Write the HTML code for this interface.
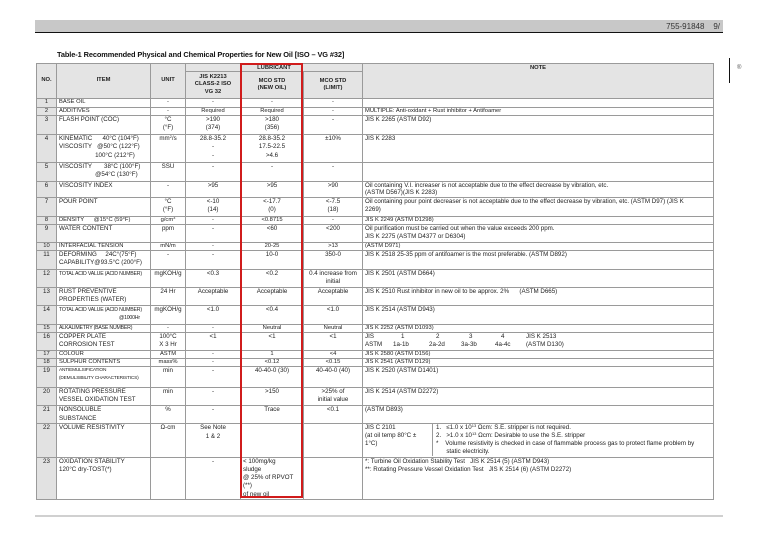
<!DOCTYPE html>
<html><head><meta charset="utf-8"><style>
*{margin:0;padding:0;box-sizing:border-box}
body{width:768px;height:543px;background:#fff;position:relative;overflow:hidden;font-family:"Liberation Sans",sans-serif;color:#222}
.bar{position:absolute;left:35px;top:20px;width:688px;height:13px;background:#c8c8c8;border-bottom:1.5px solid #111}
.bar span{position:absolute;right:3px;top:2px;font-size:8px;color:#333}
.title{position:absolute;left:57px;top:50px;font-size:7.4px;font-weight:bold;color:#111;letter-spacing:-0.1px}
table{position:absolute;left:36px;top:63px;width:677px;border-collapse:collapse;table-layout:fixed;font-size:6.2px;line-height:8.4px}
td,th{border:1px solid #9a9a9a;vertical-align:top;padding:0 2px;overflow:hidden;white-space:nowrap}
th{background:#e4e4e4;font-weight:bold;vertical-align:middle;font-size:5.8px;line-height:7.5px}
td.n{background:#e2e2e2;text-align:center}
td.c{text-align:center}
tr.s td{line-height:7px;font-size:5.8px;vertical-align:middle}
sup{font-size:4px;line-height:0;position:relative;top:-2px;vertical-align:baseline}
.red{position:absolute;left:240px;top:63px;width:63px;height:435px;border:2px solid #d01c1c}
.vl{position:absolute;left:729px;top:58px;width:1px;height:25px;background:#111}
.reg{position:absolute;left:737px;top:65px;font-size:6px;color:#555}
.bl{position:absolute;left:35px;top:515px;width:688px;height:2px;background:#d0d0d0}
.rel{position:relative}
.ab{position:absolute}
</style></head><body>
<div class="bar"><span>755-91848&nbsp;&nbsp;&nbsp;&nbsp;9/</span></div>
<div class="title">Table-1 Recommended Physical and Chemical Properties for New Oil [ISO – VG #32]</div>
<table>
<colgroup><col style="width:20px"><col style="width:94px"><col style="width:35px"><col style="width:55px"><col style="width:63px"><col style="width:59px"><col style="width:351px"></colgroup>
<tr style="height:8px"><th rowspan="2">NO.</th><th rowspan="2">ITEM</th><th rowspan="2">UNIT</th><th colspan="3" style="line-height:6px">LUBRICANT</th><th rowspan="2" style="vertical-align:top;padding-top:1px">NOTE</th></tr>
<tr style="height:27px"><th>JIS K2213<br>CLASS-2 ISO<br>VG 32</th><th>MCO STD<br>(NEW OIL)</th><th>MCO STD<br>(LIMIT)</th></tr>
<tr class="s" style="height:8.7px"><td class="n">1</td><td>BASE OIL</td><td class="c">-</td><td class="c">-</td><td class="c">-</td><td class="c">-</td><td></td></tr>
<tr class="s" style="height:8.3px"><td class="n">2</td><td>ADDITIVES</td><td class="c">-</td><td class="c">Required</td><td class="c">Required</td><td class="c">-</td><td>MULTIPLE: Anti-oxidant + Rust inhibitor + Antifoamer</td></tr>
<tr style="height:19px"><td class="n">3</td><td>FLASH POINT (COC)</td><td class="c">°C<br>(°F)</td><td class="c">&gt;190<br>(374)</td><td class="c">&gt;180<br>(356)</td><td class="c">-</td><td>JIS K 2265 (ASTM D92)</td></tr>
<tr style="height:28px"><td class="n">4</td><td>KINEMATIC&nbsp;&nbsp;&nbsp;&nbsp;&nbsp;&nbsp;40°C (104°F)<br>VISCOSITY&nbsp;&nbsp;&nbsp;@50°C (122°F)<br>&nbsp;&nbsp;&nbsp;&nbsp;&nbsp;&nbsp;&nbsp;&nbsp;&nbsp;&nbsp;&nbsp;&nbsp;&nbsp;&nbsp;&nbsp;&nbsp;&nbsp;&nbsp;&nbsp;&nbsp;&nbsp;100°C (212°F)</td><td class="c">mm<sup>2</sup>/s</td><td class="c">28.8-35.2<br>-<br>-</td><td class="c">28.8-35.2<br>17.5-22.5<br>&gt;4.6</td><td class="c">±10%</td><td>JIS K 2283</td></tr>
<tr style="height:19px"><td class="n">5</td><td>VISCOSITY&nbsp;&nbsp;&nbsp;&nbsp;&nbsp;&nbsp;&nbsp;38°C (100°F)<br>&nbsp;&nbsp;&nbsp;&nbsp;&nbsp;&nbsp;&nbsp;&nbsp;&nbsp;&nbsp;&nbsp;&nbsp;&nbsp;&nbsp;&nbsp;&nbsp;&nbsp;&nbsp;&nbsp;&nbsp;&nbsp;@54°C (130°F)</td><td class="c">SSU</td><td class="c">-</td><td class="c">-</td><td class="c">-</td><td></td></tr>
<tr style="height:16px"><td class="n">6</td><td>VISCOSITY INDEX</td><td class="c">-</td><td class="c">&gt;95</td><td class="c">&gt;95</td><td class="c">&gt;90</td><td style="line-height:7.5px">Oil containing V.I. increaser is not acceptable due to the effect decrease by vibration, etc.<br>(ASTM D567)(JIS K 2283)</td></tr>
<tr style="height:19px"><td class="n">7</td><td>POUR POINT</td><td class="c">°C<br>(°F)</td><td class="c">&lt;-10<br>(14)</td><td class="c">&lt;-17.7<br>(0)</td><td class="c">&lt;-7.5<br>(18)</td><td>Oil containing pour point decreaser is not acceptable due to the effect decrease by vibration, etc. (ASTM D97) (JIS K<br>2269)</td></tr>
<tr class="s" style="height:7px"><td class="n">8</td><td>DENSITY&nbsp;&nbsp;&nbsp;&nbsp;&nbsp;&nbsp;@15°C (59°F)</td><td class="c">g/cm<sup>3</sup></td><td class="c">-</td><td class="c">&lt;0.8715</td><td class="c">-</td><td>JIS K 2249 (ASTM D1298)</td></tr>
<tr style="height:17.7px"><td class="n">9</td><td>WATER CONTENT</td><td class="c">ppm</td><td class="c">-</td><td class="c">&lt;60</td><td class="c">&lt;200</td><td>Oil purification must be carried out when the value exceeds 200 ppm.<br>JIS K 2275 (ASTM D4377 or D6304)</td></tr>
<tr class="s" style="height:7.3px"><td class="n">10</td><td>INTERFACIAL TENSION</td><td class="c">mN/m</td><td class="c">-</td><td class="c">20-25</td><td class="c">&gt;13</td><td>(ASTM D971)</td></tr>
<tr style="height:19px"><td class="n">11</td><td>DEFORMING&nbsp;&nbsp;&nbsp;&nbsp;&nbsp;24C°(75°F)<br>CAPABILITY@93.5°C (200°F)</td><td class="c">-</td><td class="c">-</td><td class="c">10-0</td><td class="c">350-0</td><td>JIS K 2518 25-35 ppm of antifoamer is the most preferable. (ASTM D892)</td></tr>
<tr style="height:18px"><td class="n">12</td><td style="font-size:5.2px;letter-spacing:-0.2px">TOTAL ACID VALUE (ACID NUMBER)</td><td class="c">mgKOH/g</td><td class="c">&lt;0.3</td><td class="c">&lt;0.2</td><td class="c">0.4 increase from<br>initial</td><td>JIS K 2501 (ASTM D664)</td></tr>
<tr style="height:18px"><td class="n">13</td><td>RUST PREVENTIVE<br>PROPERTIES (WATER)</td><td class="c">24 Hr</td><td class="c">Acceptable</td><td class="c">Acceptable</td><td class="c">Acceptable</td><td>JIS K 2510 Rust inhibitor in new oil to be approx. 2%&nbsp;&nbsp;&nbsp;&nbsp;&nbsp;&nbsp;(ASTM D665)</td></tr>
<tr style="height:19px"><td class="n">14</td><td style="font-size:5.2px;letter-spacing:-0.2px">TOTAL ACID VALUE (ACID NUMBER)<br><span style="padding-left:60px">@1000Hr</span></td><td class="c">mgKOH/g</td><td class="c">&lt;1.0</td><td class="c">&lt;0.4</td><td class="c">&lt;1.0</td><td>JIS K 2514 (ASTM D943)</td></tr>
<tr class="s" style="height:7px"><td class="n">15</td><td style="font-size:5.2px;letter-spacing:-0.2px">ALKALIMETRY (BASE NUMBER)</td><td class="c">-</td><td class="c">-</td><td class="c">Neutral</td><td class="c">Neutral</td><td>JIS K 2252 (ASTM D1093)</td></tr>
<tr style="height:18px"><td class="n">16</td><td>COPPER PLATE<br>CORROSION TEST</td><td class="c">100°C<br>X 3 Hr</td><td class="c">&lt;1</td><td class="c">&lt;1</td><td class="c">&lt;1</td><td class="rel">JIS<br>ASTM<span class="ab" style="left:38px;top:0">1</span><span class="ab" style="left:30px;top:8.4px">1a-1b</span><span class="ab" style="left:73px;top:0">2</span><span class="ab" style="left:66px;top:8.4px">2a-2d</span><span class="ab" style="left:106px;top:0">3</span><span class="ab" style="left:98px;top:8.4px">3a-3b</span><span class="ab" style="left:138px;top:0">4</span><span class="ab" style="left:132px;top:8.4px">4a-4c</span><span class="ab" style="left:163px;top:0">JIS K 2513</span><span class="ab" style="left:163px;top:8.4px">(ASTM D130)</span></td></tr>
<tr class="s" style="height:8px"><td class="n">17</td><td>COLOUR</td><td class="c">ASTM</td><td class="c">-</td><td class="c">1</td><td class="c">&lt;4</td><td>JIS K 2580 (ASTM D156)</td></tr>
<tr class="s" style="height:8px"><td class="n">18</td><td>SULPHUR CONTENTS</td><td class="c">mass%</td><td class="c">-</td><td class="c">&lt;0.12</td><td class="c">&lt;0.15</td><td>JIS K 2541 (ASTM D129)</td></tr>
<tr style="height:21px"><td class="n">19</td><td style="font-size:4.8px;letter-spacing:-0.2px">ANTIEMULSIFICATION<br>(DEMULSIBILITY CHARACTERISTICS)</td><td class="c">min</td><td class="c">-</td><td class="c">40-40-0 (30)</td><td class="c">40-40-0 (40)</td><td>JIS K 2520 (ASTM D1401)</td></tr>
<tr style="height:18.7px"><td class="n">20</td><td>ROTATING PRESSURE<br>VESSEL OXIDATION TEST</td><td class="c">min</td><td class="c">-</td><td class="c">&gt;150</td><td class="c">&gt;25% of<br>initial value</td><td>JIS K 2514 (ASTM D2272)</td></tr>
<tr style="height:18px"><td class="n">21</td><td>NONSOLUBLE<br>SUBSTANCE</td><td class="c">%</td><td class="c">-</td><td class="c">Trace</td><td class="c">&lt;0.1</td><td>(ASTM D893)</td></tr>
<tr style="height:33.3px"><td class="n">22</td><td>VOLUME RESISTIVITY</td><td class="c">Ω-cm</td><td class="c">See Note<br>1 &amp; 2</td><td></td><td></td><td style="padding:0"><div style="display:flex;height:32px;line-height:7.8px;overflow:hidden"><div style="width:70px;border-right:1px solid #9a9a9a;padding:0 2px">JIS C 2101<br>(at oil temp 80°C ±<br>1°C)</div><div style="padding:0 3px">1.&nbsp;&nbsp;&nbsp;≤1.0 x 10<sup>13</sup> Ωcm: S.E. stripper is not required.<br>2.&nbsp;&nbsp;&nbsp;&gt;1.0 x 10<sup>13</sup> Ωcm: Desirable to use the S.E. stripper<br>*&nbsp;&nbsp;&nbsp;&nbsp;Volume resistivity is checked in case of flammable process gas to protect flame problem by<br>&nbsp;&nbsp;&nbsp;&nbsp;&nbsp;&nbsp;static electricity.</div></div></td></tr>
<tr style="height:42.7px"><td class="n">23</td><td>OXIDATION STABILITY<br>120°C dry-TOST(*)</td><td></td><td class="c">-</td><td style="line-height:8.2px">&lt; 100mg/kg<br>sludge<br>@ 25% of RPVOT<br>(**)<br>of new oil</td><td></td><td>*: Turbine Oil Oxidation Stability Test&nbsp;&nbsp;&nbsp;JIS K 2514 (5) (ASTM D943)<br>**: Rotating Pressure Vessel Oxidation Test&nbsp;&nbsp;&nbsp;JIS K 2514 (6) (ASTM D2272)</td></tr>
</table>
<div class="red"></div>
<div class="vl"></div>
<div class="reg">®</div>
<div class="bl"></div>
</body></html>
